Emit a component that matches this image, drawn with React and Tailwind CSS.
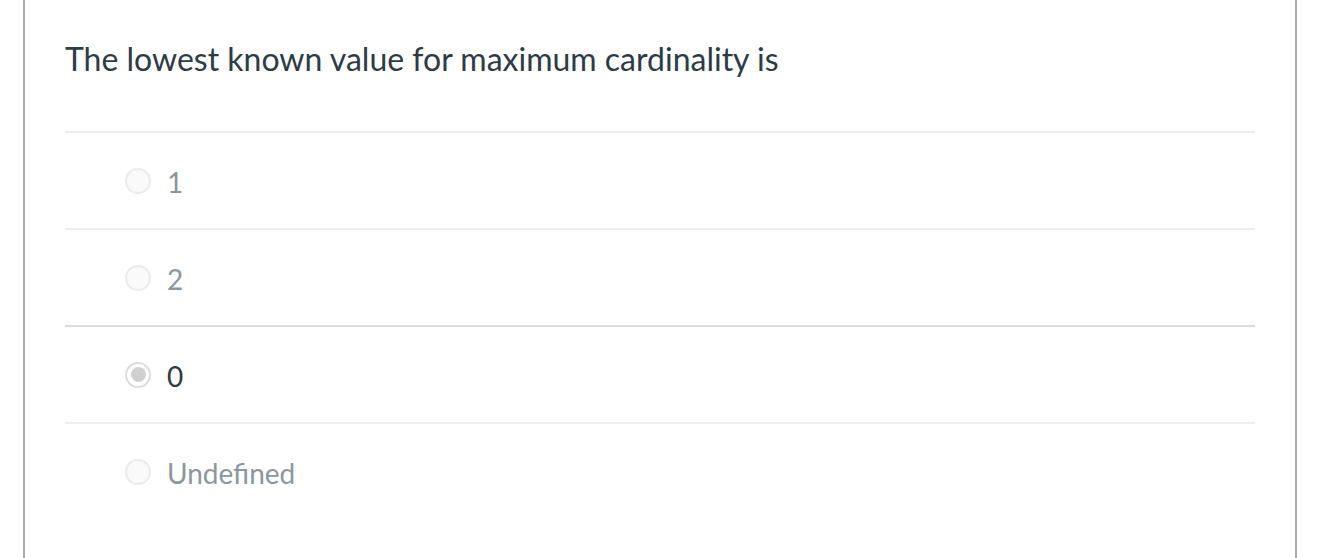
import { useState } from "react";

const options = [
  { id: "a", label: "1" },
  { id: "b", label: "2" },
  { id: "c", label: "0" },
  { id: "d", label: "Undefined" },
];

const App = () => {
  const [selected, setSelected] = useState("c");

  return (
    <div className="min-h-[558px] bg-white pl-[23px] pr-[25px]" style={{ fontFamily: "Lato, 'Open Sans', sans-serif" }}>
      <div className="min-h-[558px] border-x-2 border-[#aaaaaa] px-10 pt-[35px]">
        <h1 className="mb-[48px] text-[32px] leading-[48px] text-[#2d3b45]">The lowest known value for maximum cardinality is</h1>
        <div>
          {options.map((option, i) => {
            const active = selected === option.id;
            return (
              <label
                key={option.id}
                className={`flex h-[97px] cursor-pointer items-center gap-[16px] border-t-2 pl-[60px] ${i === 2 ? "border-[#dddddd]" : "border-[#eeeeee]"}`}
                onClick={() => setSelected(option.id)}
              >
                <span className={`grid h-[26px] w-[26px] place-items-center rounded-full border-2 ${active ? "border-[#dcdcdc] bg-white" : "border-[#ebebeb] bg-[#fafafa]"}`}>
                  {active && <span className="h-[15px] w-[15px] rounded-full bg-[#d0d0d0]" />}
                </span>
                <span className={`pt-[2px] text-[28px] ${active ? "text-[#2d3b45]" : "text-[#8b969e]"}`}>{option.label}</span>
              </label>
            );
          })}
        </div>
      </div>
    </div>
  );
};

export default App;
